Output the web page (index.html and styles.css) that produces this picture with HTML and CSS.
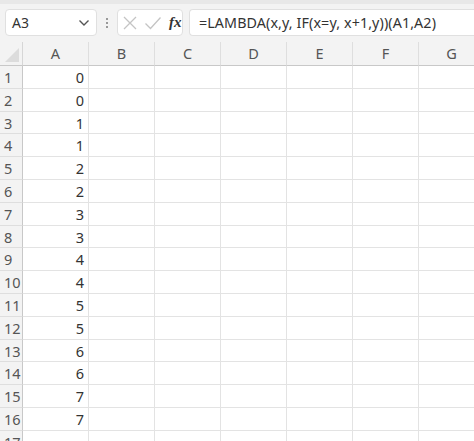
FILE: index.html
```html
<!DOCTYPE html>
<html lang="ja">
<head>
	<meta charset="UTF-8">
	<meta name="viewport" content="width=device-width, initial-scale=1.0">
	<title>LAMBDA</title>
	<link rel="stylesheet" href="styles.css">
</head>
<body>
	<div class="toolbar">
		<div class="name-box">
			<span>A3</span>
			<svg class="chevron" width="12" height="8" viewBox="0 0 12 8"><path d="M1.5 1.5 L6 6 L10.5 1.5" fill="none" stroke="#555" stroke-width="1.4"/></svg>
		</div>
		<div class="dots"><i></i><i></i><i></i></div>
		<div class="icons">
			<svg width="16" height="16" viewBox="0 0 16 16"><path d="M2 2 L14 14 M14 2 L2 14" stroke="#c4c4c4" stroke-width="1.3"/></svg>
			<svg width="18" height="16" viewBox="0 0 18 16"><path d="M1.5 8.5 L6.5 13.5 L16.5 2.5" fill="none" stroke="#c4c4c4" stroke-width="1.3"/></svg>
			<span class="fx">fx</span>
		</div>
		<div class="formula">=LAMBDA(x,y, IF(x=y, x+1,y))(A1,A2)</div>
	</div>
	<div class="sheet" id="sheet">
		<div class="corner"><span></span></div>
	</div>
	<script>
const sheet = document.getElementById('sheet')
const cols = ['A', 'B', 'C', 'D', 'E', 'F', 'G']
const values = [0, 0, 1, 1, 2, 2, 3, 3, 4, 4, 5, 5, 6, 6, 7, 7]

cols.forEach(c => {
    const h = document.createElement('div')
    h.className = 'col-head'
    h.textContent = c
    sheet.appendChild(h)
})

for (let r = 1; r <= 17; r++) {
    const rh = document.createElement('div')
    rh.className = 'row-head'
    rh.textContent = r
    sheet.appendChild(rh)
    cols.forEach((c, i) => {
        const cell = document.createElement('div')
        cell.className = 'cell'
        if (i === 0 && values[r - 1] !== undefined) cell.textContent = values[r - 1]
        sheet.appendChild(cell)
    })
}
	</script>
</body>
</html>
```

FILE: styles.css
```css
body {
    margin: 0;
    background: #fff;
    font-family: "Noto Sans", "Noto Sans CJK JP", sans-serif;
    overflow: hidden;
    width: 474px;
    height: 441px;
}

.toolbar {
    height: 42px;
    box-sizing: border-box;
    background: #f3f3f3;
    border-top: 4px solid #e8e8e8;
    display: flex;
    align-items: flex-start;
    padding: 5px 0 0 5px;
}

.name-box {
    width: 92px;
    height: 27px;
    box-sizing: border-box;
    background: #fff;
    border: 1px solid #e0e0e0;
    border-radius: 4px;
    display: flex;
    align-items: center;
    justify-content: space-between;
    padding: 0 6px 0 6px;
    font-size: 14px;
    color: #333;
}

.dots {
    width: 20px;
    height: 27px;
    display: flex;
    flex-direction: column;
    align-items: center;
    justify-content: center;
    gap: 2px;
}

.dots i {
    width: 2px;
    height: 2px;
    background: #999;
}

.icons {
    width: 66px;
    height: 27px;
    box-sizing: border-box;
    background: #fff;
    border: 1px solid #e0e0e0;
    border-radius: 4px;
    display: flex;
    align-items: center;
    gap: 6px;
    padding-left: 4px;
}

.fx {
    font-family: "Liberation Serif", serif;
    font-style: italic;
    font-weight: bold;
    font-size: 15px;
    color: #333;
    margin-left: 1px;
}

.formula {
    margin-left: 6px;
    flex: 1;
    height: 27px;
    box-sizing: border-box;
    background: #fff;
    border: 1px solid #e0e0e0;
    border-right: none;
    border-radius: 4px 0 0 4px;
    padding-left: 9px;
    font-size: 14.3px;
    letter-spacing: 0.1px;
    line-height: 25px;
    color: #333;
    white-space: nowrap;
}

.sheet {
    display: grid;
    grid-template-columns: 23px repeat(7, 66px);
    grid-template-rows: 24px repeat(17, 22.8px);
    font-size: 14.5px;
}

.corner {
    background: #f3f3f3;
    border-right: 1px solid #d6d6d6;
    border-bottom: 1px solid #c8c8c8;
    position: relative;
}

.corner span {
    position: absolute;
    right: 3px;
    bottom: 3px;
    width: 0;
    height: 0;
    border-left: 14px solid transparent;
    border-bottom: 14px solid #dcdcdc;
}

.col-head {
    background: #f3f3f3;
    border-right: 1px solid #dedede;
    border-bottom: 1px solid #c8c8c8;
    color: #555;
    text-align: center;
    line-height: 23px;
}

.row-head {
    background: #f3f3f3;
    border-right: 1px solid #c8c8c8;
    border-bottom: 1px solid #dedede;
    color: #555;
    padding-left: 4px;
    line-height: 22px;
}

.cell {
    border-right: 1px solid #e3e3e3;
    border-bottom: 1px solid #e3e3e3;
    text-align: right;
    padding-right: 4px;
    line-height: 22px;
    color: #333;
}
```
